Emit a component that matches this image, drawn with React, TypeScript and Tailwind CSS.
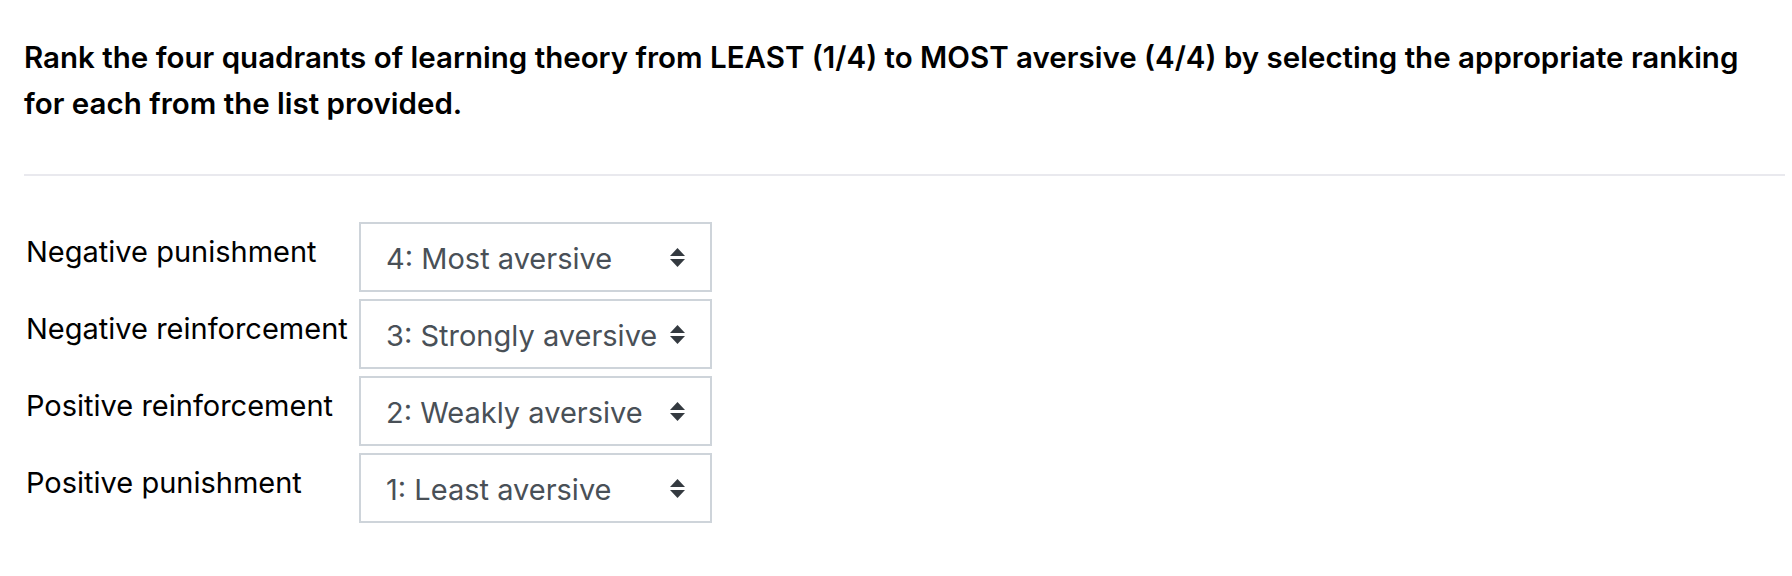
const rows = [
  { label: "Negative punishment", value: "4: Most aversive" },
  { label: "Negative reinforcement", value: "3: Strongly aversive" },
  { label: "Positive reinforcement", value: "2: Weakly aversive" },
  { label: "Positive punishment", value: "1: Least aversive" },
];

function UpDown() {
  return (
    <svg width="15" height="19" viewBox="0 0 15 19" className="shrink-0">
      <path d="M7.5 0 L15 8 L0 8 Z" fill="#343a40" />
      <path d="M0 11 L15 11 L7.5 19 Z" fill="#343a40" />
    </svg>
  );
}

export default function App() {
  return (
    <div
      className="h-[576px] w-full bg-white pl-6 pr-[7px] pt-[34px] text-black"
      style={{ fontFamily: "Inter, 'Liberation Sans', sans-serif" }}
    >
      <p className="text-[29.5px] font-semibold leading-[46px]">
        Rank the four quadrants of learning theory from LEAST (1/4) to MOST aversive (4/4) by selecting the appropriate
        ranking for each from the list provided.
      </p>

      <div className="mt-[48px] h-[2px] bg-[#e9e9ee]" />

      <div className="mt-[46px] flex flex-col gap-[7px]">
        {rows.map((r) => (
          <div key={r.label} className="flex items-start">
            <div className="w-[335px] shrink-0 pt-[12px] pl-[2px] text-[29px] leading-[35px]">{r.label}</div>
            <div className="flex h-[70px] w-[353px] items-center justify-between border-2 border-[#ced4da] pl-[25px] pr-[25px] text-[29px] text-[#495057]">
              <span className="pt-[3px]">{r.value}</span>
              <UpDown />
            </div>
          </div>
        ))}
      </div>
    </div>
  );
}
